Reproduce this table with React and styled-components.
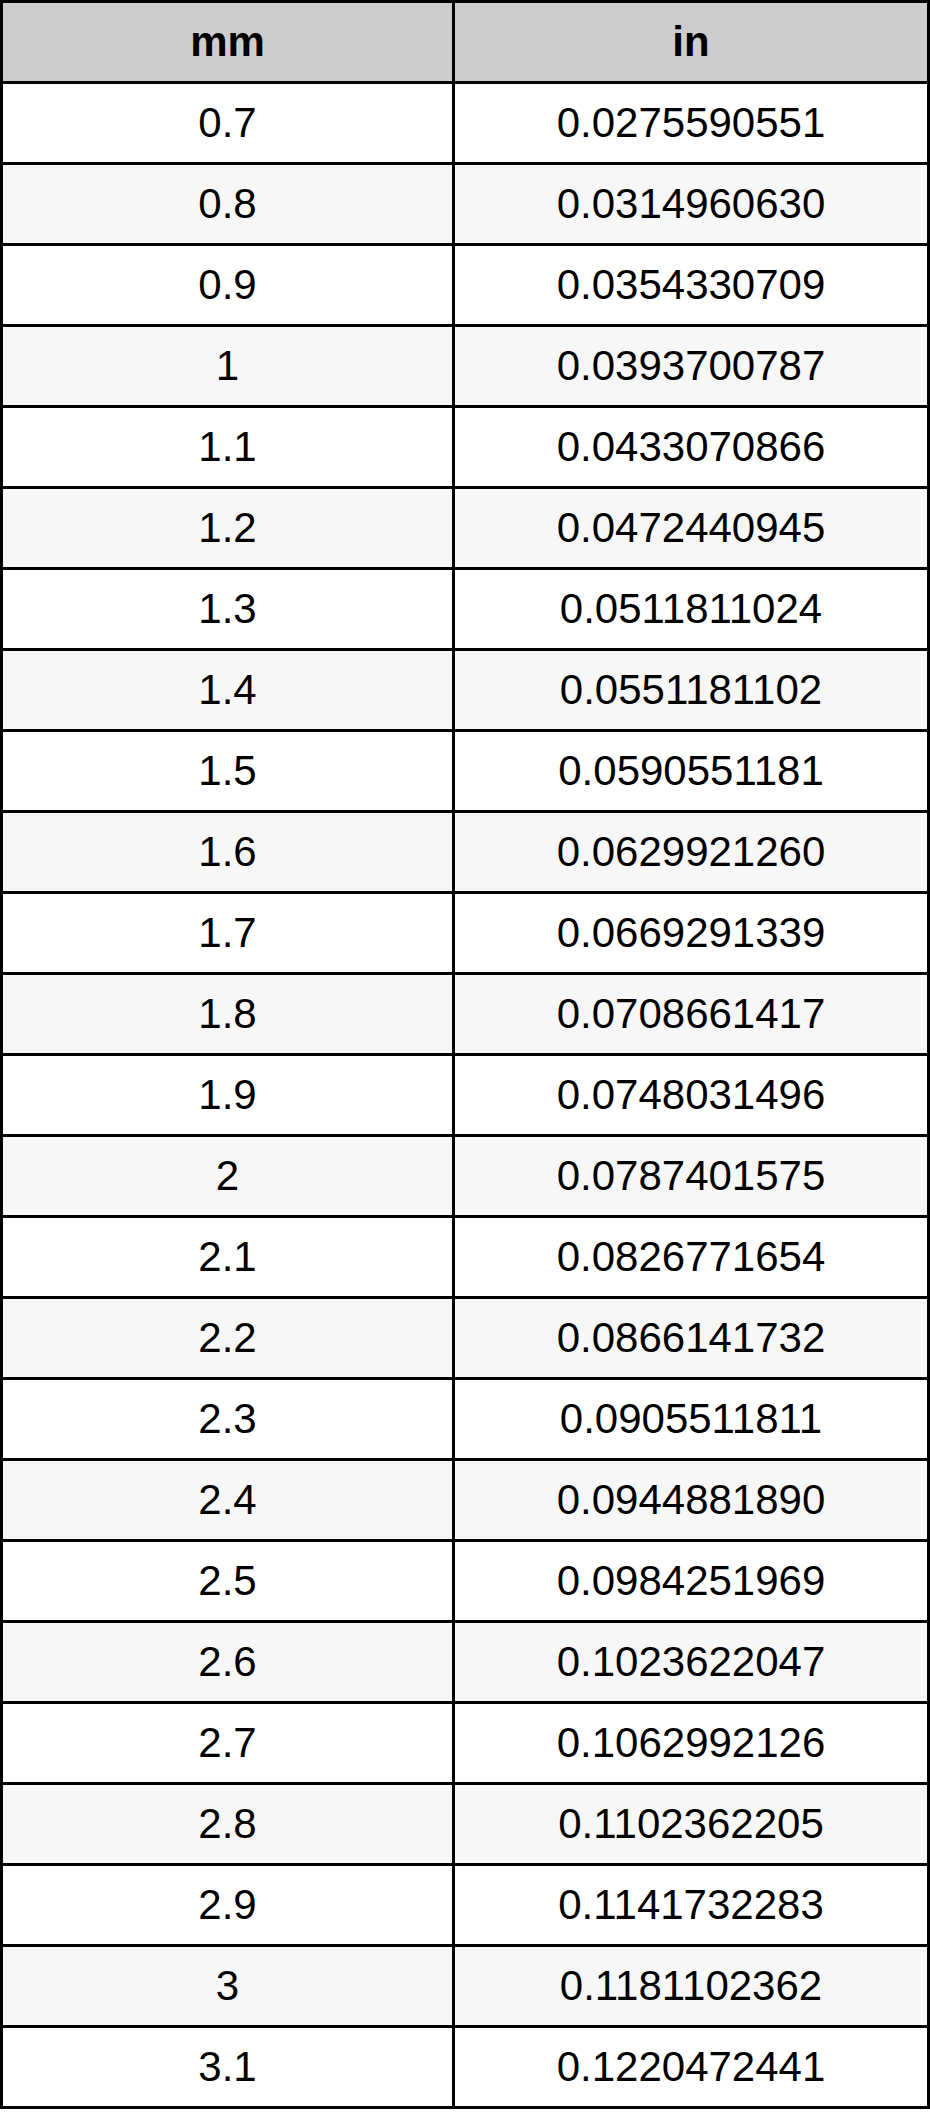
import React from 'react';
import styled, { createGlobalStyle } from 'styled-components';

const GlobalStyle = createGlobalStyle`
  html, body {
    margin: 0;
    padding: 0;
    background: #fff;
  }
`;

const Table = styled.div`
  display: grid;
  grid-template-columns: 449px 472px;
  grid-auto-rows: 78px;
  gap: 3px;
  padding: 3px;
  width: 930px;
  box-sizing: border-box;
  background-color: #000;
  font-family: 'Liberation Sans', Arial, sans-serif;
  font-size: 42px;
  color: #000;
`;

const Cell = styled.div`
  display: flex;
  align-items: center;
  justify-content: center;
  background-color: ${(p) => (p.$alt ? '#f7f7f7' : '#fff')};
`;

const HeadCell = styled(Cell)`
  background-color: #cdcdcd;
  font-weight: bold;
`;

const rows = [
  ['0.7', '0.0275590551'],
  ['0.8', '0.0314960630'],
  ['0.9', '0.0354330709'],
  ['1', '0.0393700787'],
  ['1.1', '0.0433070866'],
  ['1.2', '0.0472440945'],
  ['1.3', '0.0511811024'],
  ['1.4', '0.0551181102'],
  ['1.5', '0.0590551181'],
  ['1.6', '0.0629921260'],
  ['1.7', '0.0669291339'],
  ['1.8', '0.0708661417'],
  ['1.9', '0.0748031496'],
  ['2', '0.0787401575'],
  ['2.1', '0.0826771654'],
  ['2.2', '0.0866141732'],
  ['2.3', '0.0905511811'],
  ['2.4', '0.0944881890'],
  ['2.5', '0.0984251969'],
  ['2.6', '0.1023622047'],
  ['2.7', '0.1062992126'],
  ['2.8', '0.1102362205'],
  ['2.9', '0.1141732283'],
  ['3', '0.1181102362'],
  ['3.1', '0.1220472441'],
];

const App = () => (
  <>
    <GlobalStyle />
    <Table>
      <HeadCell>mm</HeadCell>
      <HeadCell>in</HeadCell>
      {rows.map(([mm, inch], i) => (
        <React.Fragment key={mm}>
          <Cell $alt={i % 2 === 1}>{mm}</Cell>
          <Cell $alt={i % 2 === 1}>{inch}</Cell>
        </React.Fragment>
      ))}
    </Table>
  </>
);

export default App;
